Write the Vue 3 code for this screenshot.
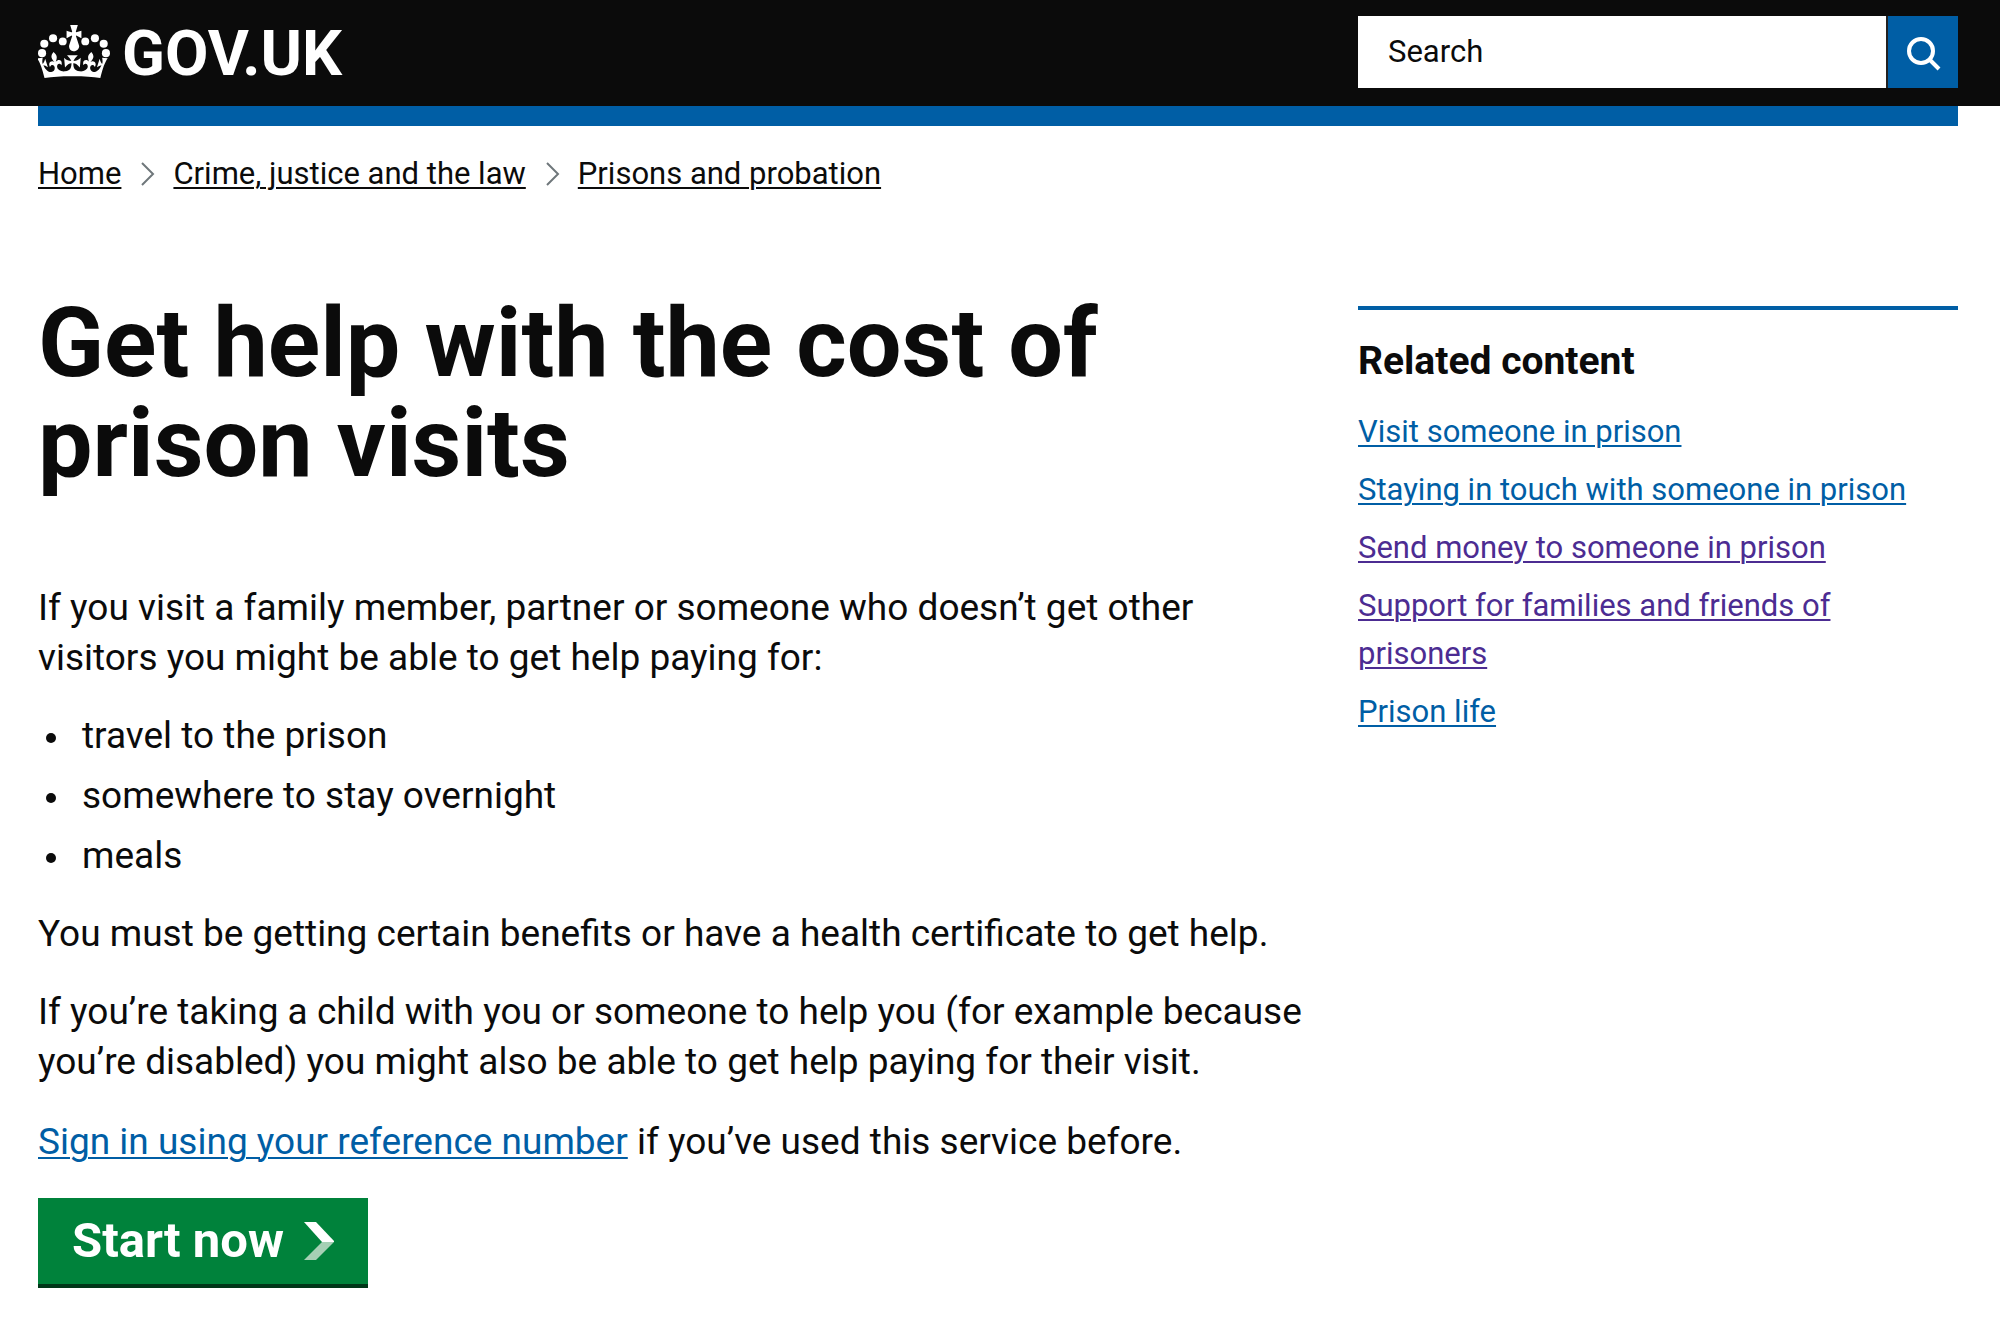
<script setup>
import { ref } from 'vue'

const query = ref('')

const crumbs = ['Home', 'Crime, justice and the law', 'Prisons and probation']

const costs = ['travel to the prison', 'somewhere to stay overnight', 'meals']

const related = [
  { text: 'Visit someone in prison' },
  { text: 'Staying in touch with someone in prison' },
  { text: 'Send money to someone in prison', visited: true },
  { text: 'Support for families and friends of prisoners', visited: true },
  { text: 'Prison life' },
]
</script>

<template>
  <div class="page">
    <header class="header">
      <div class="container columns header-inner">
        <a class="logo" href="#" aria-label="GOV.UK home">
          <svg class="crown" viewBox="0 0 32 24" aria-hidden="true">
            <circle cx="11" cy="7.3" r="1.75" />
            <circle cx="21" cy="7.3" r="1.75" />
            <circle cx="6.7" cy="5.9" r="1.8" />
            <circle cx="25.3" cy="5.9" r="1.8" />
            <circle cx="2.8" cy="8.3" r="1.8" />
            <circle cx="29.2" cy="8.3" r="1.8" />
            <circle cx="1.8" cy="12.5" r="1.8" />
            <circle cx="30.2" cy="12.5" r="1.8" />
            <path d="M17 4.7l2.3 1.2V2.5l-2.3.7-.2-.2.9-3h-3.4l.9 3-.2.2c-.1.1-2.3-.7-2.3-.7v3.4L15 4.7c.1.1.1.2.2.2l-1.3 4c-.1.2-.1.4-.1.6 0 1.1.8 2 1.9 2.2h.7c1-.2 1.9-1.1 1.9-2.1 0-.2 0-.4-.1-.6l-1.3-4c-.1-.2 0-.2.1-.3" />
            <path d="M16 22.8c4.4 0 8.4.3 11.7.8 1.1-4.5 2-7 3.3-8.8l-2.5-.2c.2 1.3.3 1.9 0 2.7-.4-.4-.8-1.1-1.1-2.3l-1.2 3.8c.7-.5 1.3-.8 2-.9-1.1 2.5-2.6 3.1-3.5 3-1.1-.2-1.7-1.2-1.5-2.1.3-1.2 1.5-1.5 2.1-.1 1.1-2.3-.8-3-2-2.3 1.7-1.7 1.7-2.8.4-4.4-1.7 1.4-1.7 2.5-1 4.3-1.2-1.4-3.2-.6-2.5 1.6.9-1.4 2.1-.5 1.9.8-.2 1.1-1.7 2.1-3.5 1.9-2.7-.2-2.9-2.1-2.9-3.6.7-.1 1.9.5 2.9 1.9l.4-4.3c-1.1 1.1-2.1 1.4-3.2 1.4.4-1 1.9-2.5 1.9-2.5h-4.8s1.5 1.5 1.9 2.5c-1.1 0-2.1-.2-3.2-1.4l.4 4.3c1-1.4 2.2-2 2.9-1.9-.1 1.5-.2 3.4-2.9 3.6-1.9.2-3.4-.8-3.5-1.9-.2-1.3 1-2.2 1.9-.8.7-2.3-1.2-3-2.5-1.6.7-1.8.7-2.9-1-4.3-1.3 1.6-1.3 2.7.4 4.4-1.2-.7-3.1 0-2 2.3.6-1.4 1.8-1.1 2.1.1.2.9-.3 1.9-1.5 2.1-.9.2-2.4-.5-3.5-3 .6 0 1.2.3 2 .9l-1.2-3.8c-.3 1.1-.7 1.9-1.1 2.3-.3-.8-.2-1.4 0-2.7l-2.5.2c1.3 1.8 2.2 4.3 3.3 8.8 3.6-.5 7.3-.8 11.7-.8" />
          </svg>
          <span class="wordmark">GOV.UK</span>
        </a>
        <form class="search" role="search" @submit.prevent>
          <label v-show="!query" for="site-search">Search</label>
          <input id="site-search" v-model="query" type="search" />
          <button type="submit" aria-label="Search GOV.UK">
            <svg viewBox="0 0 34 34" aria-hidden="true">
              <circle cx="14" cy="14" r="12" />
              <path d="M22 22l10 10" />
            </svg>
          </button>
        </form>
      </div>
    </header>

    <div class="container">
      <div class="bar"></div>

      <nav aria-label="Breadcrumb">
        <ol class="crumbs">
          <li v-for="(crumb, i) in crumbs" :key="crumb">
            <svg v-if="i" class="chevron" viewBox="0 0 14 24" aria-hidden="true">
              <path d="M1 1l11 11L1 23" />
            </svg>
            <a href="#">{{ crumb }}</a>
          </li>
        </ol>
      </nav>

      <div class="columns body">
        <main>
          <h1>Get help with the cost of prison visits</h1>
          <p>
            If you visit a family member, partner or someone who doesn’t get other visitors you might
            be able to get help paying for:
          </p>
          <ul class="bullets">
            <li v-for="cost in costs" :key="cost">{{ cost }}</li>
          </ul>
          <p>You must be getting certain benefits or have a health certificate to get help.</p>
          <p>
            If you’re taking a child with you or someone to help you (for example because you’re
            disabled) you might also be able to get help paying for their visit.
          </p>
          <p class="sign-in">
            <a href="#">Sign in using your reference number</a> if you’ve used this service before.
          </p>
          <button class="start" type="button">
            Start now
            <svg viewBox="0 0 30 38" aria-hidden="true">
              <path d="M0 0h12l18 19v1H18z" />
              <path class="shade" d="M18 20h12L12 38H0z" />
            </svg>
          </button>
        </main>

        <aside class="related">
          <h2>Related content</h2>
          <ul>
            <li v-for="link in related" :key="link.text">
              <a href="#" :class="{ visited: link.visited }">{{ link.text }}</a>
            </li>
          </ul>
        </aside>
      </div>
    </div>
  </div>
</template>

<style>
body {
  margin: 0;
  background: #fff;
}
</style>

<style scoped>
.page {
  color: #0b0b0b;
  font-family: Roboto, "Liberation Sans", sans-serif;
  font-size: 37px;
  line-height: 50px;
}

.container {
  padding: 0 42px 0 38px;
}

.columns {
  display: grid;
  grid-template-columns: 32fr 15fr;
  column-gap: 40px;
}

ul,
ol {
  margin: 0;
  padding: 0;
  list-style: none;
}

a {
  color: #005ea5;
  text-decoration: underline;
  text-decoration-thickness: 2px;
  text-underline-offset: 3px;
}

.visited {
  color: #4c2c92;
}

.header {
  background: #0b0b0b;
}

.header-inner {
  align-items: center;
  padding-top: 16px;
  padding-bottom: 18px;
}

.logo {
  display: flex;
  align-items: center;
  gap: 12px;
  padding-top: 4px;
  color: #fff;
  text-decoration: none;
}

.crown {
  width: 72px;
  height: 54px;
  margin-bottom: 4px;
  fill: #fff;
}

.wordmark {
  font-size: 63px;
  font-weight: 700;
  line-height: 68px;
}

.search {
  position: relative;
  display: flex;
  gap: 2px;
  background: #222;
}

.search label {
  position: absolute;
  top: 0;
  left: 30px;
  font-size: 31px;
  line-height: 72px;
}

.search input {
  flex: 1;
  min-width: 0;
  height: 72px;
  box-sizing: border-box;
  padding: 0 30px;
  border: 0;
  border-radius: 0;
  background: #fff;
  color: #0b0b0b;
  font: inherit;
  font-size: 31px;
  appearance: none;
}

.search button {
  display: flex;
  align-items: center;
  justify-content: center;
  width: 70px;
  padding: 4px 0 0 2px;
  border: 0;
  background: #005ea5;
}

.search svg {
  width: 34px;
  height: 34px;
  fill: none;
  stroke: #fff;
  stroke-width: 4;
}

.bar {
  height: 20px;
  background: #005ea5;
}

.crumbs {
  display: flex;
  flex-wrap: wrap;
  padding-top: 28px;
  font-size: 31px;
  line-height: 40px;
}

.crumbs li {
  display: flex;
  align-items: center;
}

.crumbs a {
  color: #0b0b0b;
}

.chevron {
  width: 14px;
  height: 24px;
  margin: 0 18px 0 20px;
  fill: none;
  stroke: #6f777b;
  stroke-width: 2;
}

.body {
  align-items: start;
  padding-top: 99px;
  padding-bottom: 32px;
}

h1 {
  margin: 0 0 90px;
  font-size: 97px;
  font-weight: 700;
  line-height: 100px;
}

p {
  margin: 0 0 28px;
}

.bullets {
  margin-bottom: 28px;
  padding-left: 44px;
}

.bullets li {
  position: relative;
}

.bullets li + li {
  margin-top: 10px;
}

.bullets li::before {
  content: "";
  position: absolute;
  top: 22px;
  left: -36px;
  width: 10px;
  height: 10px;
  border-radius: 50%;
  background: #0b0b0b;
}

.sign-in {
  margin: 30px 0 0;
}

.start {
  display: flex;
  align-items: center;
  gap: 20px;
  margin-top: 31px;
  padding: 14px 34px;
  border: 0;
  background: #00823b;
  box-shadow: 0 4px 0 #003618;
  color: #fff;
  font: inherit;
  font-size: 49px;
  font-weight: 700;
  line-height: 58px;
}

.start svg {
  width: 30px;
  height: 38px;
  fill: #fff;
}

.start .shade {
  fill: #a6d0b5;
}

.related {
  margin-top: 13px;
  padding-top: 30px;
  border-top: 4px solid #005ea5;
  font-size: 31px;
  line-height: 48px;
}

.related h2 {
  margin: 0 0 26px;
  font-size: 39px;
  font-weight: 700;
  line-height: 42px;
}

.related li + li {
  margin-top: 10px;
}
</style>
